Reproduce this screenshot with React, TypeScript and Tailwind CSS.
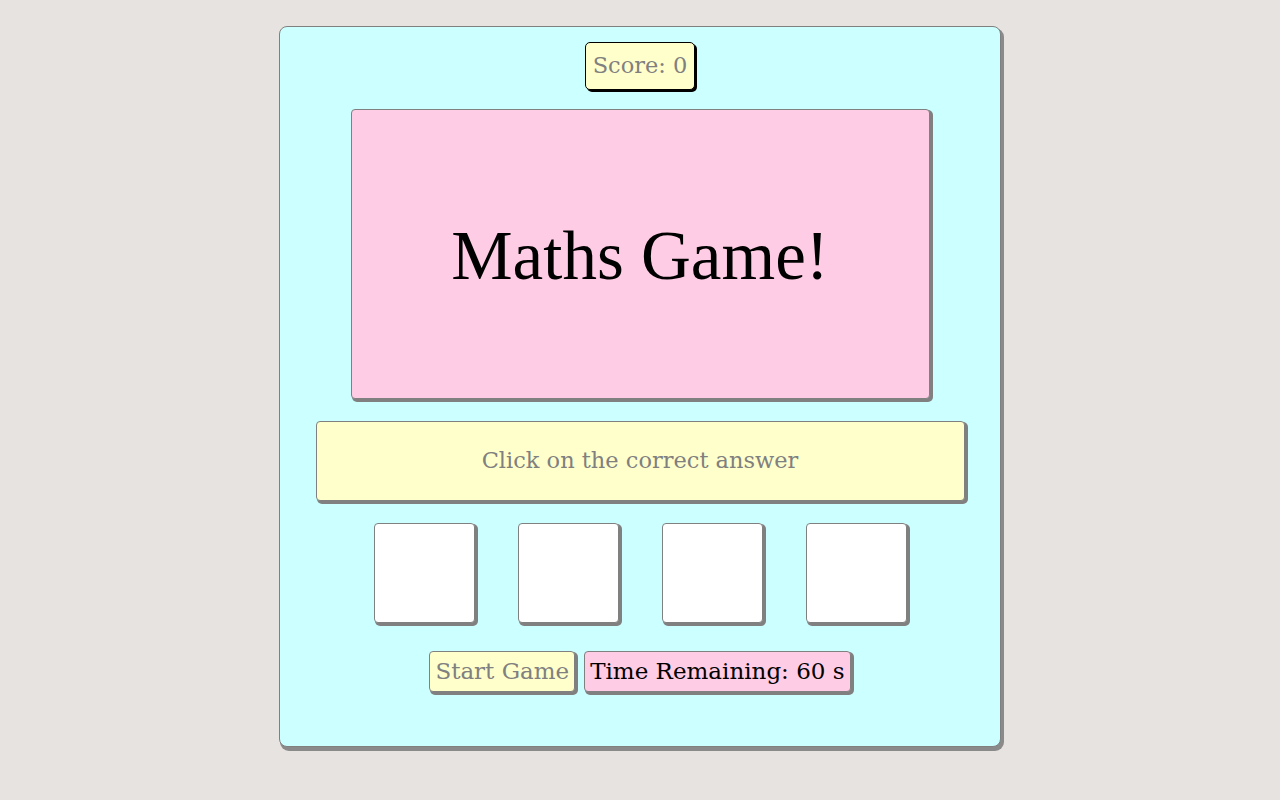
import React, { useState } from 'react';

const serif = { fontFamily: '"DejaVu Serif", "Liberation Serif", serif' };

const App: React.FC = () => {
    const [score] = useState(0);
    const [time] = useState(60);
    const choices = ['', '', '', ''];

    return (
        <div className="min-h-screen bg-[#e7e3e1] flex justify-center pt-[26px]" style={serif}>
            <div className="w-[722px] h-[721px] bg-[#ccffff] border border-[#808080] rounded-lg shadow-[2px_3px_0_1px_#8a8a8a] flex flex-col items-center">
                <div className="mt-[15px] h-[48px] px-[7px] flex items-center bg-[#ffffcc] border border-black rounded-[5px] shadow-[2px_2px_0_#000] text-[22.5px] text-[#808080]">
                    Score: {score}
                </div>

                <div className="mt-[19px] w-[579px] h-[290px] bg-[#ffcce6] border border-[#808080] rounded-[4px] shadow-[2px_2px_0_1px_#808080] flex items-center justify-center">
                    <h1 className="text-[69px] text-black pt-[6px]" style={{ fontFamily: '"Liberation Serif", serif' }}>
                        Maths Game!
                    </h1>
                </div>

                <div className="mt-[22px] w-[649px] h-[80px] bg-[#ffffcc] border border-[#808080] rounded-[4px] shadow-[2px_2px_0_1px_#808080] flex items-center justify-center text-[22.5px] text-[#808080]">
                    Click on the correct answer
                </div>

                <div className="mt-[22px] flex gap-[43px]">
                    {choices.map((c, i) => (
                        <div
                            key={i}
                            className="w-[101px] h-[100px] bg-white border border-[#808080] rounded-[4px] shadow-[2px_2px_0_1px_#808080] flex items-center justify-center text-[28px]"
                        >
                            {c}
                        </div>
                    ))}
                </div>

                <div className="mt-[28px] flex gap-[9px]">
                    <button className="h-[41px] px-[5px] bg-[#ffffcc] border border-[#808080] rounded-[4px] shadow-[2px_2px_0_1px_#808080] text-[23px] text-[#808080]">
                        Start Game
                    </button>
                    <div className="h-[41px] px-[5px] flex items-center bg-[#ffcce6] border border-[#808080] rounded-[4px] shadow-[2px_2px_0_1px_#808080] text-[23px] text-black">
                        Time Remaining: {time} s
                    </div>
                </div>
            </div>
        </div>
    );
};

export default App;
